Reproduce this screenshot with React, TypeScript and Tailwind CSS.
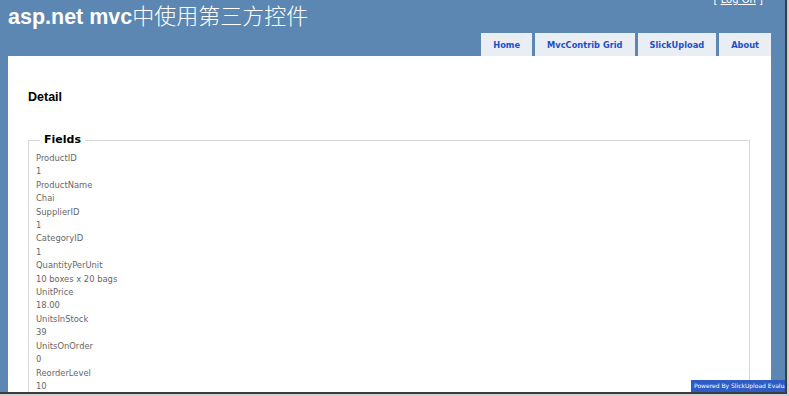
import React from "react";

const fields: [string, string][] = [
  ["ProductID", "1"],
  ["ProductName", "Chai"],
  ["SupplierID", "1"],
  ["CategoryID", "1"],
  ["QuantityPerUnit", "10 boxes x 20 bags"],
  ["UnitPrice", "18.00"],
  ["UnitsInStock", "39"],
  ["UnitsOnOrder", "0"],
  ["ReorderLevel", "10"],
  ["Discontinued", "False"],
];

const tabs = ["Home", "MvcContrib Grid", "SlickUpload", "About"];

export default function App() {
  return (
    <div className="w-[789px] h-[396px] bg-[#cfcfcf] overflow-hidden">
      <div className="relative w-[787px] h-[394px] border-r-2 border-b-2 border-[#3c3c3c] bg-[#5c87b2] overflow-hidden">
        {/* header */}
        <div className="flex h-[56px] justify-between">
          <h1 className="pl-2 pt-[1px] text-white leading-[26px] whitespace-nowrap">
            <span className="font-bold text-[21.5px] font-['Liberation_Sans',Arial,sans-serif]">
              asp.net mvc
            </span>
            <span className="text-[22px] font-['Noto_Sans_CJK_SC',sans-serif] font-light">
              中使用第三方控件
            </span>
          </h1>
          <div className="flex flex-col items-end pr-[14px]">
            <div className="mt-[-6px] mr-[8px] h-[12px] text-white text-[10px] leading-[12px] font-['DejaVu_Sans',Verdana,sans-serif]">
              [ <span className="underline">Log On</span> ]
            </div>
            <ul className="mt-[27px] flex gap-[3px]">
              {tabs.map((t) => (
                <li
                  key={t}
                  className="h-[23px] px-[12px] bg-[#e8eef4] text-[#1e4fc4] font-bold text-[9.2px] leading-[23px] font-['DejaVu_Sans_Condensed','DejaVu_Sans',Verdana,sans-serif] whitespace-nowrap"
                >
                  {t}
                </li>
              ))}
            </ul>
          </div>
        </div>

        {/* main */}
        <div className="ml-2 w-[763px] bg-white pl-5 pr-[21px] pt-[33px] h-[400px]">
          <h2 className="font-bold text-[12.5px] leading-[16px] text-black font-['Liberation_Sans',Arial,sans-serif]">
            Detail
          </h2>
          <fieldset className="mt-[29px] border border-[#d6d6d6] pl-[7px] pt-[5px] pb-2">
            <legend className="ml-[4px] px-[4px] font-bold text-[11px] leading-[12px] text-black font-['DejaVu_Sans',Verdana,sans-serif]">
              Fields
            </legend>
            <div className="text-[#666666] text-[9.3px] leading-[13.4px] font-['DejaVu_Sans_Condensed','DejaVu_Sans',Verdana,sans-serif]">
              {fields.map(([k, v]) => (
                <React.Fragment key={k}>
                  <div>{k}</div>
                  <div>{v}</div>
                </React.Fragment>
              ))}
            </div>
          </fieldset>
        </div>

        {/* SlickUpload badge */}
        <div className="absolute left-[691px] top-[380px] h-[12px] w-[110px] bg-[#2d5cc6] text-white text-[6px] leading-[12px] pl-[3px] whitespace-nowrap font-['DejaVu_Sans',Verdana,sans-serif]">
          Powered By SlickUpload Evaluation
        </div>
      </div>
    </div>
  );
}
